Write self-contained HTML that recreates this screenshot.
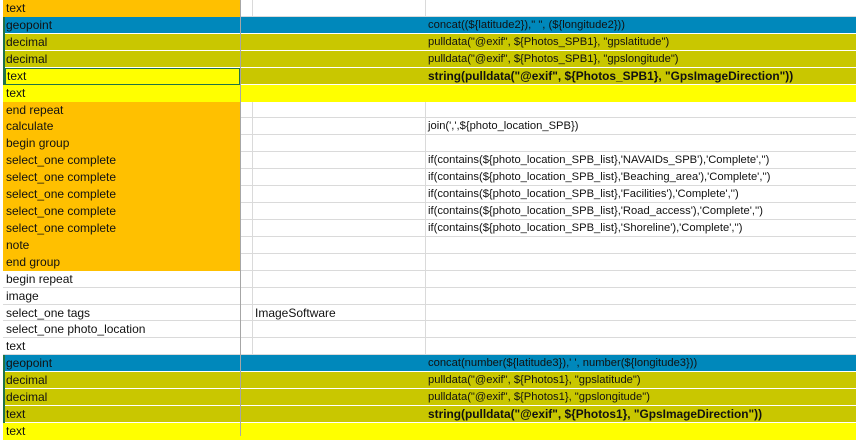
<!DOCTYPE html>
<html><head><meta charset="utf-8"><style>
body{margin:0;width:856px;height:436px;overflow:hidden;background:#fff;font-family:"Liberation Sans",sans-serif;font-size:11.2px;color:#111;position:relative}
.r{position:absolute;left:0;width:856px}
.c{position:absolute;top:0;bottom:0;white-space:nowrap;line-height:17px;overflow:visible;box-sizing:border-box}
.a{left:3px;width:237px;padding-left:3px;font-size:12px}
.b{left:240px;width:185px;padding-left:15px;font-size:12px}
.cc{left:425px;width:431px;padding-left:3px}
.gl{border-bottom:1px solid #dadada}
.or{background:#ffc000}
.bl{background:#0088bb}
.ol{background:#c9c700}
.ye{background:#ffff00}
.bd{font-weight:bold;font-size:11.9px}
.vl{position:absolute;top:0;height:436px;width:1px}
</style></head><body>
<div class="vl" style="left:252px;background:#dadada"></div>
<div class="vl" style="left:425px;background:#dadada"></div>
<div id="rows"></div>
<div class="vl" style="left:240px;background:#a6a6a6"></div>
<script>
var R=[
['text','or','',''],
['geopoint','bl','','concat((${latitude2}),&quot; &quot;, (${longitude2}))'],
['decimal','ol','','pulldata("@exif", ${Photos_SPB1}, "gpslatitude")'],
['decimal','ol','','pulldata("@exif", ${Photos_SPB1}, "gpslongitude")'],
['text','sel','','string(pulldata("@exif", ${Photos_SPB1}, "GpsImageDirection"))'],
['text','ye','',''],
['end repeat','or','',''],
['calculate','or','',"join(',',${photo_location_SPB})"],
['begin group','or','',''],
['select_one complete','or','',"if(contains(${photo_location_SPB_list},'NAVAIDs_SPB'),'Complete','')"],
['select_one complete','or','',"if(contains(${photo_location_SPB_list},'Beaching_area'),'Complete','')"],
['select_one complete','or','',"if(contains(${photo_location_SPB_list},'Facilities'),'Complete','')"],
['select_one complete','or','',"if(contains(${photo_location_SPB_list},'Road_access'),'Complete','')"],
['select_one complete','or','',"if(contains(${photo_location_SPB_list},'Shoreline'),'Complete','')"],
['note','or','',''],
['end group','or','',''],
['begin repeat','w','',''],
['image','w','',''],
['select_one tags','w','ImageSoftware',''],
['select_one photo_location','w','',''],
['text','w','',''],
['geopoint','bl','',"concat(number(${latitude3}),' ', number(${longitude3}))"],
['decimal','ol','','pulldata("@exif", ${Photos1}, "gpslatitude")'],
['decimal','ol','','pulldata("@exif", ${Photos1}, "gpslongitude")'],
['text','olb','','string(pulldata("@exif", ${Photos1}, "GpsImageDirection"))'],
['text','ye','','']
];
var h='';
for(var i=0;i<R.length;i++){
 var t=Math.round(i*16.92),n=Math.round((i+1)*16.92),ht=n-t,r=R[i],k=r[1];
 var s='<div class="r" style="top:'+t+'px;height:'+ht+'px">';
 var full=(k=='bl'||k=='ol'||k=='ye'||k=='sel'||k=='olb');
 if(full){
  var bg=k=='sel'||k=='olb'?'ol':k;
  var sep=(k!='ye')?'border-bottom:1px solid #fff;':'';
  s+='<div class="c '+bg+'" style="left:3px;width:853px;'+sep+'"></div>';
  if(k=='bl'||k=='ol'||k=='sel'||k=='olb')s+='<div class="c" style="left:3px;width:2px;background:#217346"></div>';
  if(k=='sel')s+='<div class="c ye a" style="border:1.5px solid #217346;left:5px;width:235px;padding-left:1px;line-height:14px">'+r[0]+'</div>';
  else s+='<div class="c a">'+r[0]+'</div>';
  s+='<div class="c cc'+(k=='sel'||k=='olb'?' bd':'')+'">'+r[3]+'</div>';
 }else{
  s+='<div class="c gl" style="left:241px;width:615px"></div>';
  if(k=='or')s+='<div class="c a or">'+r[0]+'</div>';
  else s+='<div class="c a gl">'+r[0]+'</div>';
  s+='<div class="c b">'+r[2]+'</div><div class="c cc">'+r[3]+'</div>';
 }
 s+='</div>';h+=s;
}
document.getElementById('rows').innerHTML=h;
</script>
</body></html>
